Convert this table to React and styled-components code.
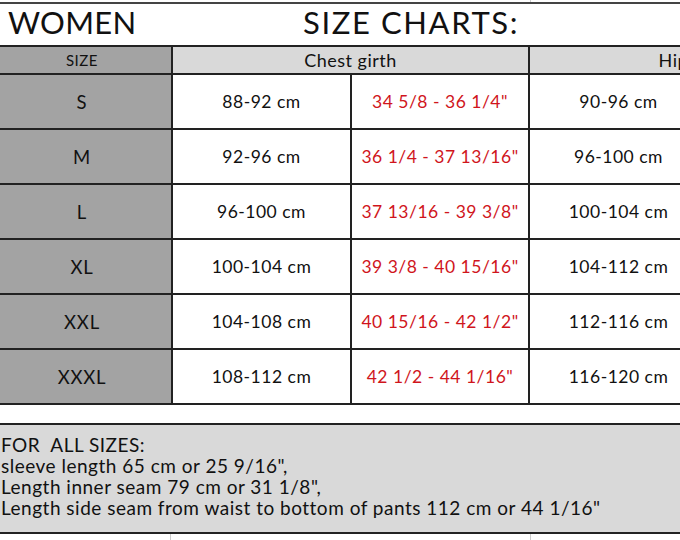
import React from 'react'
import styled, { createGlobalStyle } from 'styled-components'

const GlobalStyle = createGlobalStyle`
	html, body {
		margin: 0;
		padding: 0;
		background: #ffffff;
	}
	body {
		font-family: 'Lato', 'Open Sans', sans-serif;
		color: #111;
		overflow: hidden;
	}
`

const Page = styled.div`
	width: 900px;
	margin-left: -9px;
`

const TopStrip = styled.div`
	display: grid;
	grid-template-columns: 539px 361px;
	height: 2px;
	border-bottom: 2px solid #444;
	div + div {
		border-left: 1px solid #ccc;
	}
`

const TitleRow = styled.div`
	display: flex;
	align-items: center;
	height: 41px;
	padding-bottom: 5px;
	box-sizing: border-box;
	font-size: 31px;
	line-height: 1;
`

const Women = styled.h1`
	margin: 0;
	width: 312px;
	padding-left: 17px;
	font-size: inherit;
	font-weight: 400;
	letter-spacing: 0.3px;
	box-sizing: border-box;
`

const Charts = styled.h1`
	margin: 0;
	font-size: inherit;
	font-weight: 400;
	letter-spacing: 1.6px;
`

const Table = styled.table`
	border-collapse: collapse;
	table-layout: fixed;
	width: 870px;
	td,
	th {
		border: 2px solid #222;
		text-align: center;
		padding: 0;
	}
`

const HeadCell = styled.th`
	height: 26px;
	font-weight: 400;
	font-size: ${(p) => (p.$small ? '15px' : '18px')};
	background: ${(p) => (p.$dark ? '#a3a3a3' : '#d9d9d9')};
	letter-spacing: 0.5px;
`

const SizeCell = styled.td`
	height: 53px;
	background: #a3a3a3;
	font-size: 18.5px;
	letter-spacing: 0.8px;
`

const ValueCell = styled.td`
	height: 53px;
	font-size: 17.5px;
	letter-spacing: 0.5px;
	color: ${(p) => (p.$red ? '#d0151c' : '#111')};
`

const Note = styled.div`
	margin-top: 18px;
	background: #d9d9d9;
	border-top: 2px solid #222;
	border-bottom: 2px solid #222;
	height: 111px;
	box-sizing: border-box;
	padding: 9px 0 0 10px;
	font-size: 19px;
	line-height: 21px;
	letter-spacing: 0.5px;
	p {
		margin: 0;
	}
`

const BottomStrip = styled.div`
	display: grid;
	grid-template-columns: 179px 360px 1fr;
	height: 10px;
	div + div {
		border-left: 1px solid #ccc;
	}
`

const rows = [
	['S', '88-92 cm', '34 5/8 - 36 1/4"', '90-96 cm', '35 7/16 - 37 13/16"'],
	['M', '92-96 cm', '36 1/4 - 37 13/16"', '96-100 cm', '37 13/16 - 39 3/8"'],
	['L', '96-100 cm', '37 13/16 - 39 3/8"', '100-104 cm', '39 3/8 - 40 15/16"'],
	['XL', '100-104 cm', '39 3/8 - 40 15/16"', '104-112 cm', '40 15/16 - 44 1/16"'],
	['XXL', '104-108 cm', '40 15/16 - 42 1/2"', '112-116 cm', '44 1/16 - 45 11/16"'],
	['XXXL', '108-112 cm', '42 1/2 - 44 1/16"', '116-120 cm', '45 11/16 - 47 1/4"'],
]

const App = () => {
	return (
		<>
			<GlobalStyle />
			<Page>
				<TopStrip>
					<div />
					<div />
				</TopStrip>
				<TitleRow>
					<Women>WOMEN</Women>
					<Charts>SIZE CHARTS:</Charts>
				</TitleRow>
				<Table>
					<colgroup>
						<col style={{ width: 180 }} />
						<col style={{ width: 179 }} />
						<col style={{ width: 178 }} />
						<col style={{ width: 179 }} />
						<col style={{ width: 154 }} />
					</colgroup>
					<thead>
						<tr>
							<HeadCell $dark $small>SIZE</HeadCell>
							<HeadCell colSpan={2}>Chest girth</HeadCell>
							<HeadCell colSpan={2}>Hip girth</HeadCell>
						</tr>
					</thead>
					<tbody>
						{rows.map((r) => (
							<tr key={r[0]}>
								<SizeCell>{r[0]}</SizeCell>
								<ValueCell>{r[1]}</ValueCell>
								<ValueCell $red>{r[2]}</ValueCell>
								<ValueCell>{r[3]}</ValueCell>
								<ValueCell $red>{r[4]}</ValueCell>
							</tr>
						))}
					</tbody>
				</Table>
				<Note>
					<p>FOR&nbsp; ALL SIZES:</p>
					<p>sleeve length 65 cm or 25 9/16",</p>
					<p>Length inner seam 79 cm or 31 1/8",</p>
					<p>Length side seam from waist to bottom of pants 112 cm or 44 1/16"</p>
				</Note>
				<BottomStrip>
					<div />
					<div />
					<div />
				</BottomStrip>
			</Page>
		</>
	)
}

export default App
